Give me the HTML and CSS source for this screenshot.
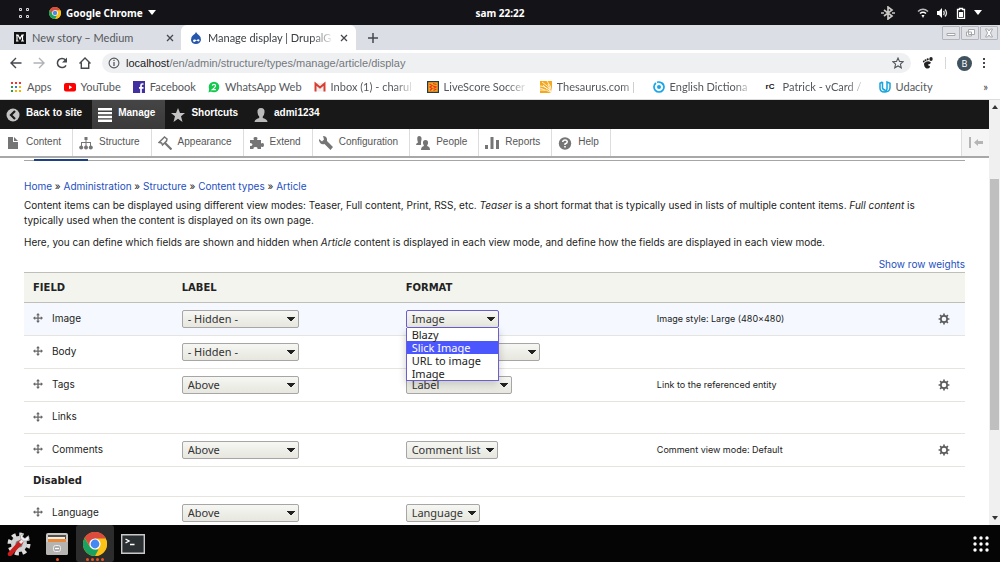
FILE: index.html
```html
<!DOCTYPE html>
<html lang="en">
<head>
<meta charset="utf-8">
<title>Manage display | DrupalGeeks</title>
<link rel="stylesheet" href="styles.css">
</head>
<body>
<svg class="defs" aria-hidden="true">
  <symbol id="chrome" viewBox="0 0 24 24">
    <circle cx="12" cy="12" r="12" fill="#fbc116"/>
    <path d="M12 6.500H22.700A12 12 0 0 1 12 24L17 14.500Z" fill="#fbc116"/>
    <path d="M1.600 6A12 12 0 0 1 22.700 6.500H12L7 14.500Z" fill="#dd4b3e"/>
    <path d="M1.600 6 7 15 12 17.500H15.500L12 24A12 12 0 0 1 1.600 6Z" fill="#1aa260"/>
    <circle cx="12" cy="12" r="5.600" fill="#fff"/><circle cx="12" cy="12" r="4.400" fill="#4688f1"/>
  </symbol>
  <symbol id="move" viewBox="0 0 16 16">
    <path d="M8 0 11 3.500H9V7h3.500V5L16 8l-3.500 3V9H9v3.500h2L8 16 5 12.500h2V9H3.500v2L0 8l3.500-3v2H7V3.500H5Z" fill="#666"/>
  </symbol>
  <symbol id="gear" viewBox="0 0 16 16">
    <g stroke="#5c5c5c" fill="none"><circle cx="8" cy="8" r="4.200" stroke-width="2.200"/>
    <path stroke-width="2.200" d="M8 .8v3M8 12.200v3M.8 8h3M12.200 8h3M2.800 2.800l2.200 2.200M11 11l2.200 2.200M2.800 13.200l2.200-2.200M11 5l2.200-2.200"/></g>
  </symbol>
  <symbol id="close" viewBox="0 0 8 8"><path d="M1 1l6 6M7 1 1 7" stroke="#45484c" stroke-width="1.300"/></symbol>
</svg>

<header class="topbar">
  <div class="topbar-left">
    <svg class="ic12" viewBox="0 0 12 12" fill="none" stroke="#ddd"><path d="M1.500 1.500h2v2h-2zM8.500 1.500h2v2h-2zM1.500 8.500h2v2h-2zM8.500 8.500h2v2h-2z"/></svg>
    <button class="app-menu"><svg class="ic12"><use href="#chrome"/></svg><span>Google Chrome</span><svg class="caret" viewBox="0 0 8 5"><path d="M0 0h8L4 5Z" fill="#fff"/></svg></button>
  </div>
  <time class="clock">sam 22:22</time>
  <div class="topbar-right">
    <svg class="bt" viewBox="0 0 14 14" fill="none" stroke="#c9c8c4" stroke-width="1.700"><path d="M3 4l8 6-4 3V1l4 3-8 6M0 7h3M11 7h3"/></svg>
    <svg class="ic12" viewBox="0 0 12 12" fill="none" stroke="#fff" stroke-width="1.600"><path d="M1 4.500Q6 0 11 4.500" stroke="#bbb"/><path d="M3 6.500Q6 4 9 6.500"/><path d="M4.500 8 6 11 7.500 8Z" fill="#fff" stroke="none"/></svg>
    <svg class="ic12" viewBox="0 0 12 12"><path d="M1 4h2l3-3v10L3 8H1Z" fill="#fff"/><path d="M7.500 4q1.500 2 0 4M9 2.500q3 3.500 0 7" fill="none" stroke="#ddd" stroke-width="1.300"/></svg>
    <svg class="ic12" viewBox="0 0 12 12"><path d="M2.500 11.500v-9h2v-1h3v1h2v9Z" fill="none" stroke="#fff" stroke-width="1.300"/><path d="M4 5h4v5H4Z" fill="#fff"/></svg>
    <svg class="caret" viewBox="0 0 8 5"><path d="M0 0h8L4 5Z" fill="#fff"/></svg>
  </div>
</header>

<div class="tabstrip">
  <div class="tab">
    <svg class="ic12" viewBox="0 0 12 12"><path d="M0 0h12v12H0Z" fill="#111"/><path d="M2 3h2l2 4 2-4h2M2 9h2.500M7 9h3M3 3v6M8.500 3v6" fill="none" stroke="#fff" stroke-width="1.200"/></svg>
    <span class="tab-title">New story – Medium</span>
    <button class="plain" aria-label="Close tab"><svg class="ic8"><use href="#close"/></svg></button>
  </div>
  <div class="tab tab-active">
    <svg class="ic12" viewBox="0 0 12 12"><path d="M6 0Q7 2 9 3.200 11.500 5 11 8 10 12 6 12 1.500 12 1 8 .5 5 3 3.200 5.500 2 6 0Z" fill="#2757ad"/><path d="M3 8.500Q3.500 7 5 7.500l1.500.8Q8.500 6.500 9.500 8 9.500 9.800 8 9.300L6.500 8.600 4.500 10Q3 10 3 8.500Z" fill="#fff"/></svg>
    <span class="tab-title">Manage display | DrupalG</span>
    <button class="plain" aria-label="Close tab"><svg class="ic8"><use href="#close"/></svg></button>
  </div>
  <button class="plain new-tab" aria-label="New tab"><svg class="ic10" viewBox="0 0 10 10"><path d="M5 0v10M0 5h10" stroke="#45484c" stroke-width="1.500"/></svg></button>
  <div class="win-buttons">
    <button aria-label="Minimize"><svg viewBox="0 0 16 12"><path d="M4 6.500h8v2H4Z"/></svg></button>
    <button aria-label="Restore"><svg viewBox="0 0 16 12"><path d="M6.500 2.500h6v5h-6zM4.500 5h5v4h-5z"/></svg></button>
    <button aria-label="Close"><svg viewBox="0 0 16 12"><path d="M4.500 2H6.500L8 4l1.500-2h2L9.500 6l2 4h-2L8 8l-1.500 2h-2L6.500 6Z"/></svg></button>
  </div>
</div>

<div class="navbar">
  <button class="plain" aria-label="Back"><svg class="ic12" viewBox="0 0 12 12" fill="none" stroke="#45484c" stroke-width="1.400"><path d="M11.500 6H1.500M6 1 1 6l5 5"/></svg></button>
  <button class="plain" aria-label="Forward"><svg class="ic12" viewBox="0 0 12 12" fill="none" stroke="#b0b2b5" stroke-width="1.400"><path d="M.5 6h10M6 1l5 5-5 5"/></svg></button>
  <button class="plain" aria-label="Reload"><svg class="ic12" viewBox="0 0 12 12"><path d="M10 8.300A4.600 4.600 0 1 1 9.500 3" fill="none" stroke="#45484c" stroke-width="1.500"/><path d="M11 .5v5H6Z" fill="#45484c"/></svg></button>
  <button class="plain" aria-label="Home"><svg class="ic12" viewBox="0 0 12 12" fill="none" stroke="#45484c" stroke-width="1.400"><path d="M.5 6.500 6 1l5.500 5.500M2.300 5.500v5.800h7.400V5.500"/></svg></button>
  <div class="omnibox">
    <svg class="ic12" viewBox="0 0 12 12"><circle cx="6" cy="6" r="4.900" fill="none" stroke="#55585c" stroke-width="1.100"/><path d="M6 5v4M6 2.800v1.200" stroke="#55585c" stroke-width="1.300"/></svg>
    <span class="url" role="textbox" tabindex="0" aria-label="Address"><b>localhost</b>/en/admin/structure/types/manage/article/display</span>
    <svg class="ic12" viewBox="0 0 12 12"><path d="M6 1l1.500 3.400 3.700.3-2.800 2.500.9 3.600L6 8.900l-3.300 1.900.9-3.600L.8 4.700l3.700-.3Z" fill="none" stroke="#55585c" stroke-width="1.100"/></svg>
  </div>
  <svg class="ic12" viewBox="0 0 12 12" fill="#222"><path d="M2 6.500Q5 3 8.500 5 9.500 6.500 7 7.200q-2 .3-.5 1.300 1.800 0 1.500 1.500-1 2-3.500 1.500Q2 10.500 2 6.500Z"/><circle cx="1.800" cy="4.500" r=".9"/><circle cx="3.500" cy="3.200" r="1"/><circle cx="5.700" cy="2.300" r="1.100"/><ellipse cx="9" cy="2" rx="1.700" ry="1.900"/></svg>
  <span class="divider"></span>
  <button class="avatar">B</button>
  <button class="plain" aria-label="Menu"><svg class="dots" viewBox="0 0 3 11" fill="#45484c"><path d="M0 0h2v2H0zM0 4h2v2H0zM0 8h2v2H0z"/></svg></button>
</div>

<nav class="bookmarks">
  <a href="#"><svg class="ic12" viewBox="0 0 12 12"><path d="M1 1h2v2H1zM5 1h2v2H5z" fill="#e33"/><path d="M9 1h2v2H9z" fill="#e33"/><path d="M1 5h2v2H1z" fill="#2a9d4a"/><path d="M5 5h2v2H5z" fill="#3b78e7"/><path d="M9 5h2v2H9zM5 9h2v2H5zM9 9h2v2H9z" fill="#f4b400"/><path d="M1 9h2v2H1z" fill="#2a9d4a"/></svg><span>Apps</span></a>
  <a href="#"><svg class="ic12" viewBox="0 0 12 12"><rect y="2" width="12" height="8.500" rx="2" fill="#f00"/><path d="M5 4.300v4l3.200-2Z" fill="#fff"/></svg><span>YouTube</span></a>
  <a href="#"><svg class="ic12" viewBox="0 0 12 12"><path d="M0 0h12v12H0Z" fill="#4230a0"/><path d="M10.500 3H9.300Q8 3 8 4.500V12M6 6.800h4.500" stroke="#fff" stroke-width="1.700" fill="none"/></svg><span>Facebook</span></a>
  <a href="#"><svg class="ic12" viewBox="0 0 12 12"><circle cx="6" cy="6" r="5.300" fill="#12c94c"/><path d="M.5 11.500 1.500 7l3 3Z" fill="#12c94c"/><path d="M4.300 4.700Q4.500 3.300 6 3.300T7.600 4.700Q7.500 6 4.300 8.600h3.600" fill="none" stroke="#fff" stroke-width="1.200"/></svg><span>WhatsApp Web</span></a>
  <a href="#"><svg class="ic12" viewBox="0 0 12 12"><path d="M1 2h10v8.500H1Z" fill="#f0eeee"/><path d="M1.500 10.500V2.700L6 6.500l4.500-3.800v7.800" fill="none" stroke="#d93f30" stroke-width="2"/></svg><span class="clip">Inbox (1) - charul</span></a>
  <a href="#"><svg class="ic12" viewBox="0 0 12 12"><path d="M0 0h12v12H0Z" fill="#263a44"/><path d="M1.200 1.200h9.600v9.600H1.200Z" fill="#f5a623"/><path d="M2.500 3 5 4.500 3 6l2 1.500-2 2M6 2.500l3.500 1M6 5l3 1-2.500 1.500M6.500 9.500 9.500 8" stroke="#e8381c" stroke-width="1.300" fill="none"/></svg><span class="clip">LiveScore Soccer</span></a>
  <a href="#"><svg class="ic12" viewBox="0 0 12 12"><path d="M0 0h12v12H0Z" fill="#f5a81c"/><path d="M12 12Q7 8 0 9M12 12Q6 5 0 5M12 12Q8 4 2 1M12 12Q11 4 7 0M0 7l5 2M3 4l4 4M8 3l2 5" stroke="#fff" stroke-width=".8" fill="none"/></svg><span class="clip">Thesaurus.com |</span></a>
  <a href="#"><svg class="ic12" viewBox="0 0 12 12"><path d="M3 2A5 5 0 1 0 9 2" fill="none" stroke="#16a5ea" stroke-width="1.700"/><path d="M4 1.200Q8 0 10.500 4" fill="none" stroke="#16a5ea" stroke-width="1.500"/><circle cx="6" cy="6" r="2" fill="#16a5ea"/></svg><span class="clip">English Dictiona</span></a>
  <a href="#"><span class="rc">rC</span><span class="clip">Patrick - vCard /</span></a>
  <a href="#"><svg class="ic12" viewBox="0 0 12 12" fill="none" stroke="#16a5dc" stroke-width="1.500"><path d="M3.500 1 1 2.300V7q0 4 4.500 4Q8 10 8 8V1l3 1.300V7q-.5 4-5 4M3.500 1v6Q4 9 6.500 9"/></svg><span>Udacity</span></a>
  <button class="plain more">»</button>
</nav>

<div class="viewport">
  <div class="page">
    <nav class="admin-bar">
      <a href="#"><svg class="ic14" viewBox="0 0 14 14"><circle cx="7" cy="7" r="6.500" fill="#c4c4c4"/><path d="M9 3 5 7l4 4" fill="none" stroke="#181818" stroke-width="2.200"/></svg>Back to site</a>
      <a href="#" class="current"><svg class="ic14" viewBox="0 0 14 14"><path d="M0 0h14v2.400H0zM0 3.900h14v2.400H0zM0 7.800h14v2.400H0zM0 11.600h14V14H0z" fill="#fff"/></svg>Manage</a>
      <a href="#"><svg class="ic14" viewBox="0 0 14 14"><path d="M7 0l2 5h5l-4 3.300L11.500 14 7 10.700 2.500 14 4 8.300 0 5h5Z" fill="#c4c4c4"/></svg>Shortcuts</a>
      <a href="#"><svg class="ic14" viewBox="0 0 14 14"><path d="M7 0q4 0 3.500 4.500Q10.300 7 8.800 8.500V10q4.700 1.300 4.700 4H.5q0-2.700 4.700-4V8.500Q3.700 7 3.500 4.500 3 0 7 0Z" fill="#bababa"/></svg>admi1234</a>
    </nav>
    <nav class="admin-tray">
      <a href="#"><svg class="ic14" viewBox="0 0 14 14" fill="#757575"><path d="M2 1h5v5h5v7H2ZM8 1l4 4H8Z"/></svg>Content</a>
      <a href="#"><svg class="ic14" viewBox="0 0 14 14" fill="#757575"><path d="M5.500 1h3v3h-3zM6.500 4h1v6h-1zM2 6h10v1H2zM2 6h1v4H2zM11 6h1v4h-1z"/><circle cx="2.200" cy="11.500" r="2"/><circle cx="7" cy="11.500" r="2"/><circle cx="11.800" cy="11.500" r="2"/></svg>Structure</a>
      <a href="#"><svg class="ic14" viewBox="0 0 14 14" fill="none" stroke="#757575"><path d="M1 6.500 6.500 1 9 3 8.500 5l-4 4-1-2Z" stroke-width="1.500"/><path d="m7 7 6.500 6.500" stroke-width="2.200"/></svg>Appearance</a>
      <a href="#"><svg class="ic14" viewBox="0 0 14 14" fill="#757575"><path d="M0 4h4Q2.500 1 5.500 1T7 4h4v3.500q3-1.500 3 1.500t-3 1.500V13H7.500q.5-2-2-2t-2 2H0V10q2.500 0 2.500-1.500T0 7Z"/></svg>Extend</a>
      <a href="#"><svg class="ic14" viewBox="0 0 14 14" fill="#757575"><path d="M4 0Q7.500 0 8 3v2l6 6-2.500 3L5.500 8Q1 9 0 4.500V3l3 2.500L5 3.500Z"/></svg>Configuration</a>
      <a href="#"><svg class="ic14" viewBox="0 0 14 14" fill="#757575"><path d="M3 0q3 0 2.500 3.500L5 6v3H0q0-2 2-2.500Q0 0 3 0Z"/><path d="M9.500 4q3 0 2.500 3.500L11 10q3 .5 3 4H5q0-3.500 3-4L7 7.500Q6.500 4 9.500 4Z"/></svg>People</a>
      <a href="#"><svg class="ic14" viewBox="0 0 14 14" fill="#757575"><path d="M0 9h3v4H0zM5.500 1h3v12h-3zM11 4h3v9h-3z"/></svg>Reports</a>
      <a href="#"><svg class="ic14" viewBox="0 0 14 14"><circle cx="7" cy="7.500" r="6.200" fill="#757575"/><path d="M4.700 6Q5 4 7 4t2.300 1.700Q9.300 7 7 8v1" fill="none" stroke="#fff" stroke-width="1.500"/><path d="M6.200 10h1.600v1.500H6.200z" fill="#fff"/></svg>Help</a>
      <button class="tray-toggle" aria-label="Vertical orientation"><svg class="ic14" viewBox="0 0 14 12" fill="#b5b5b5"><path d="M0 0h2v11H0zM5 5.500 9 2v2h5v3H9v2Z"/></svg></button>
    </nav>

    <main class="content">
      <div class="local-tabs"><span></span></div>
      <nav class="crumbs"><a href="#">Home</a> » <a href="#">Administration</a> » <a href="#">Structure</a> » <a href="#">Content types</a> » <a href="#">Article</a></nav>
      <p>Content items can be displayed using different view modes: Teaser, Full content, Print, RSS, etc. <em>Teaser</em> is a short format that is typically used in lists of multiple content items. <em>Full content</em> is typically used when the content is displayed on its own page.</p>
      <p>Here, you can define which fields are shown and hidden when <em>Article</em> content is displayed in each view mode, and define how the fields are displayed in each view mode.</p>
      <div class="weights"><a href="#">Show row weights</a></div>
      <table class="fields">
        <colgroup><col class="c-field"><col class="c-label"><col class="c-format"><col><col class="c-gear"></colgroup>
        <thead><tr><th>FIELD</th><th>LABEL</th><th>FORMAT</th><th></th><th></th></tr></thead>
        <tbody>
          <tr class="active"><td><span class="name"><svg class="ic10"><use href="#move"/></svg>Image</span></td>
            <td><select class="w-label" aria-label="Label for Image"><option>- Hidden -</option></select></td>
            <td><div class="picker"><select class="w-image open" aria-label="Format for Image"><option>Image</option></select>
              <ul class="options" role="listbox" aria-label="Formats"><li role="option">Blazy</li><li role="option" aria-selected="true">Slick Image</li><li role="option">URL to image</li><li role="option">Image</li></ul></div></td>
            <td class="summary">Image style: Large (480×480)</td><td><button class="plain" aria-label="Edit Image"><svg class="ic12"><use href="#gear"/></svg></button></td></tr>
          <tr><td><span class="name"><svg class="ic10"><use href="#move"/></svg>Body</span></td>
            <td><select class="w-label" aria-label="Label for Body"><option>- Hidden -</option></select></td>
            <td><select class="w-body" aria-label="Format for Body"><option></option></select></td><td></td><td></td></tr>
          <tr><td><span class="name"><svg class="ic10"><use href="#move"/></svg>Tags</span></td>
            <td><select class="w-label" aria-label="Label for Tags"><option>Above</option></select></td>
            <td><select class="w-tags" aria-label="Format for Tags"><option>Label</option></select></td>
            <td class="summary">Link to the referenced entity</td><td><button class="plain" aria-label="Edit Tags"><svg class="ic12"><use href="#gear"/></svg></button></td></tr>
          <tr class="short"><td><span class="name"><svg class="ic10"><use href="#move"/></svg>Links</span></td><td></td><td></td><td></td><td></td></tr>
          <tr><td><span class="name"><svg class="ic10"><use href="#move"/></svg>Comments</span></td>
            <td><select class="w-label" aria-label="Label for Comments"><option>Above</option></select></td>
            <td><select class="w-comments" aria-label="Format for Comments"><option>Comment list</option></select></td>
            <td class="summary">Comment view mode: Default</td><td><button class="plain" aria-label="Edit Comments"><svg class="ic12"><use href="#gear"/></svg></button></td></tr>
          <tr class="region"><th colspan="5">Disabled</th></tr>
          <tr><td><span class="name"><svg class="ic10"><use href="#move"/></svg>Language</span></td>
            <td><select class="w-label" aria-label="Label for Language"><option>Above</option></select></td>
            <td><select class="w-lang" aria-label="Format for Language"><option>Language</option></select></td><td></td><td></td></tr>
        </tbody>
      </table>
    </main>
  </div>
  <div class="scrollbar">
    <svg viewBox="0 0 6 4"><path d="M0 4h6L3 0Z" fill="#333"/></svg>
    <div class="track"><div class="thumb"></div></div>
    <svg viewBox="0 0 6 4"><path d="M0 0h6L3 4Z" fill="#333"/></svg>
  </div>
</div>

<footer class="dock">
  <button class="dock-item" aria-label="Settings"><svg viewBox="0 0 24 24"><circle cx="12" cy="12" r="8" fill="#d2d2d2"/><circle cx="12" cy="12" r="9.500" fill="none" stroke="#dcdcdc" stroke-width="4" stroke-dasharray="4 3.460"/><circle cx="12" cy="12" r="3.500" fill="#777"/><path d="m3 22 11-12" stroke="#c81f1f" stroke-width="4.500" stroke-linecap="round"/><path d="m13 11 4-4" stroke="#e9e9e9" stroke-width="3"/><path d="M21.500 3.500 18 6.500 15.500 5l1-3.500Q12 3 14 7q2 3 6 2 3.500-2 1.500-5.500Z" fill="#f4f4f4" stroke="#777" stroke-width=".5"/></svg></button>
  <button class="dock-item" aria-label="Files"><svg viewBox="0 0 24 24"><rect x="1" y="1" width="22" height="22" rx="2" fill="#c9c8c4"/><path d="M3 3h18v7H3Z" fill="#55504c"/><path d="M3 5h17v2H3Z" fill="#f5eee4"/><path d="M3 7h18v3H3Z" fill="#e9883a"/><path d="M1 10h22v11q0 2-2 2H3q-2 0-2-2Z" fill="#b5b4b0"/><rect x="8.500" y="13.500" width="7" height="6" rx="2" fill="#aaa" stroke="#eee"/><path d="M10 16.500h4" stroke="#fff" stroke-width="1.200"/></svg><span class="run"><i></i></span></button>
  <button class="dock-item focused" aria-label="Google Chrome"><svg><use href="#chrome"/></svg><span class="run"><i></i><i></i><i></i><i></i></span></button>
  <button class="dock-item" aria-label="Terminal"><svg viewBox="0 0 24 24"><path d="M.7 2.700h22.600v18.600H.7Z" fill="#2b3033" stroke="#c9c9c9" stroke-width="1.400"/><path d="m4.500 7 3.500 2-3.500 2M9 12.500h4.500" fill="none" stroke="#fff" stroke-width="1.400"/></svg></button>
  <button class="dock-item apps" aria-label="Show applications"><svg viewBox="0 0 16 16" fill="#fff"><circle cx="2" cy="2" r="1.700"/><circle cx="8" cy="2" r="1.700"/><circle cx="14" cy="2" r="1.700"/><circle cx="2" cy="8" r="1.700"/><circle cx="8" cy="8" r="1.700"/><circle cx="14" cy="8" r="1.700"/><circle cx="2" cy="14" r="1.700"/><circle cx="8" cy="14" r="1.700"/><circle cx="14" cy="14" r="1.700"/></svg></button>
</footer>
</body>
</html>
```
FILE: styles.css
```css
* { box-sizing: border-box; }
body { margin: 0; height: 100vh; display: flex; flex-direction: column; overflow: hidden; background: #fff; color: #222; font: 10px/15px Inter, "DejaVu Sans", sans-serif; }
svg { display: block; flex: none; }
a { text-decoration: none; }
button { font: inherit; cursor: pointer; }
.defs { position: absolute; width: 0; height: 0; }
.plain { display: block; border: 0; background: none; padding: 0; }
.ic8 { width: 8px; height: 8px; }
.ic10 { width: 10px; height: 10px; }
.ic12 { width: 12px; height: 12px; }
.ic14 { width: 14px; height: 14px; }

.topbar { display: grid; grid-template-columns: 1fr auto 1fr; align-items: center; height: 25px; flex: none; padding: 0 18px; background: #131318; color: #fff; font: bold 10px/14px "Noto Sans", sans-serif; }
.topbar-left, .topbar-right, .app-menu { display: flex; align-items: center; }
.topbar-left { gap: 19px; }
.app-menu { gap: 5px; padding: 0; border: 0; background: none; color: inherit; }
.topbar-right { justify-content: flex-end; gap: 7px; }
.bt { width: 14px; height: 14px; margin-right: 15px; }
.caret { width: 8px; height: 5px; }

.tabstrip { display: flex; align-items: stretch; height: 25px; flex: none; background: #dbdee5; font: 11px/16px Lato, "Noto Sans", sans-serif; color: #54575c; }
.tab { display: flex; align-items: center; gap: 6px; width: 181px; padding: 0 7px 0 14px; }
.tab-active { width: 175px; padding: 0 8px 0 9px; background: #fff; border-radius: 6px 6px 0 0; color: #3c4043; }
.tab-title { flex: 1; white-space: nowrap; }
.tab-active .tab-title { mask-image: linear-gradient(to right, #000 82%, transparent); }
.new-tab { padding: 0 12px; }
.win-buttons { display: flex; gap: 1px; margin-left: auto; padding: 1px 2px 0 0; }
.win-buttons button { width: 18px; height: 14px; padding: 0; border: 1px solid #b3b5ba; border-radius: 1px; background: #dfe1e6; }
.win-buttons svg { width: 16px; height: 12px; fill: #fff; stroke: #a5a7ab; }

.navbar { display: flex; align-items: center; gap: 11px; height: 26px; flex: none; padding: 0 14px 0 10px; }
.omnibox { flex: 1; display: flex; align-items: center; gap: 6px; height: 20px; padding: 0 7px 0 6px; border-radius: 10px; background: #eff0f2; font: 11px/16px "Liberation Sans", sans-serif; color: #74787d; }
.url { flex: 1; white-space: nowrap; }
.url b { font-weight: 400; color: #202124; }
.divider { width: 1px; height: 12px; background: #d5d7da; }
.avatar { width: 15px; height: 15px; padding: 0; border: 0; border-radius: 50%; background: #3f525e; color: #fff; font: 9px/15px "Noto Sans", sans-serif; }
.dots { width: 3px; height: 11px; }

.bookmarks { display: flex; align-items: center; gap: 12px; height: 24px; flex: none; padding: 0 12px 2px 10px; border-bottom: 1px solid #dadce0; font: 11px/16px Lato, "Noto Sans", sans-serif; white-space: nowrap; }
.bookmarks a { display: flex; align-items: center; gap: 5px; color: #54575c; }
.clip { width: 84px; mask-image: linear-gradient(to right, #000 76%, transparent); }
.rc { width: 12px; font: bold 8px/12px "Liberation Sans", sans-serif; color: #111; }
.more { margin-left: auto; color: #3c4043; }

.viewport { flex: 1; min-height: 0; display: flex; }
.page { flex: 1; min-width: 0; overflow: hidden; }
.admin-bar { display: flex; height: 29px; background: #181818; font: bold 10px/26px "Liberation Sans", sans-serif; }
.admin-bar a { display: flex; gap: 6px; padding: 0 10px 0 6px; color: #fff; }
.admin-bar svg { margin-top: 8px; }
.admin-bar .current { background: linear-gradient(#454545, #3a3a3a); }
.admin-tray { display: flex; height: 29px; border-bottom: 2px solid #a8a8a8; background: #fff; font: 10px/26px "Liberation Sans", sans-serif; }
.admin-tray a { display: flex; gap: 6px; padding: 0 11px 0 6px; border-right: 1px solid #ddd; color: #565656; }
.admin-tray svg { margin-top: 7px; }
.tray-toggle { display: flex; width: 28px; margin-left: auto; padding: 0 7px; border: 0; border-left: 1px solid #ddd; background: #f5f5f5; }

.content { padding: 0 24px; }
.local-tabs { height: 3px; padding: 0 10px; border-bottom: 1px solid #a6a6a6; }
.local-tabs span { display: block; width: 54px; height: 3px; border-bottom: 2px solid #1c3f85; }
.crumbs { margin: 18px 0 4px; }
.content a { color: #1d4fbf; }
.content p { margin: 0 0 7px; padding-right: 24px; }
.weights { text-align: right; }

.fields { width: 100%; table-layout: fixed; border-collapse: collapse; }
.c-field { width: 15.8%; }
.c-label { width: 23.8%; }
.c-format { width: 26.7%; }
.c-gear { width: 36px; }
.fields th { padding: 0 9px; text-align: left; font-family: "DejaVu Sans", sans-serif; }
.fields thead th { height: 30px; padding-bottom: 1px; background: #f3f4ee; border-top: 1px solid #bfbfba; border-bottom: 1px solid #bfbfba; }
.fields td { height: 33px; padding: 0 9px; border-bottom: 1px solid #e6e4df; }
.fields .short td { height: 32px; }
.region th { height: 30px; padding-bottom: 2px; border-bottom: 1px solid #e6e4df; }
.active td { background: #f5f9ff; }
.name { display: flex; align-items: center; gap: 9px; padding-bottom: 2px; }
.fields .summary { padding-bottom: 2px; font-size: 9px; }
.fields select { appearance: none; display: block; height: 18px; padding: 0 5px; border: 1px solid #a6a6a6; border-radius: 2px; color: #333; font: 11px/16px "Noto Sans", sans-serif;
  background: linear-gradient(38deg, transparent 50%, #222 50%) right 7px center / 4px 5px no-repeat, linear-gradient(322deg, transparent 50%, #222 50%) right 3px center / 4px 5px no-repeat, linear-gradient(#f6f6f3, #e7e7df); }
.w-label { width: 117px; }
.w-image { width: 93px; }
.w-body { width: 134px; }
.w-tags { width: 106px; }
.w-comments { width: 92px; }
.w-lang { width: 74px; }
.picker { position: relative; }
.fields .open { border-color: #6b5fd0; }
.options { position: absolute; z-index: 1; top: 18px; left: 0; width: 93px; margin: 0; padding: 0; list-style: none; border: 1px solid #6b5fd0; border-top: 0; background: #fff; box-shadow: 0 3px 8px #0003; font: 11px/13px "Noto Sans", sans-serif; }
.options li { padding: 0 5px; white-space: nowrap; }
.options [aria-selected] { background: #4b56ff; color: #fff; }

.scrollbar { display: flex; flex-direction: column; align-items: center; gap: 4px; width: 11px; padding: 5px 0; background: #f0f0f0; }
.scrollbar svg { width: 6px; height: 4px; }
.track { flex: 1; align-self: stretch; padding: 0 1px; }
.thumb { height: 63%; margin-top: 66px; background: #bfbfbf; }

.dock { display: flex; height: 37px; flex: none; background: #050505; }
.dock-item { display: flex; flex-direction: column; align-items: center; width: 38px; padding: 7px 0 0; border: 0; background: none; }
.dock-item svg { width: 24px; height: 24px; }
.focused { background: #2c2c2c; border-radius: 3px; }
.run { display: flex; gap: 2px; margin-top: 2px; }
.run i { width: 3px; height: 3px; border-radius: 50%; background: #e95420; }
.apps { margin-left: auto; padding-top: 11px; }
.dock .apps svg { width: 16px; height: 16px; }
```
